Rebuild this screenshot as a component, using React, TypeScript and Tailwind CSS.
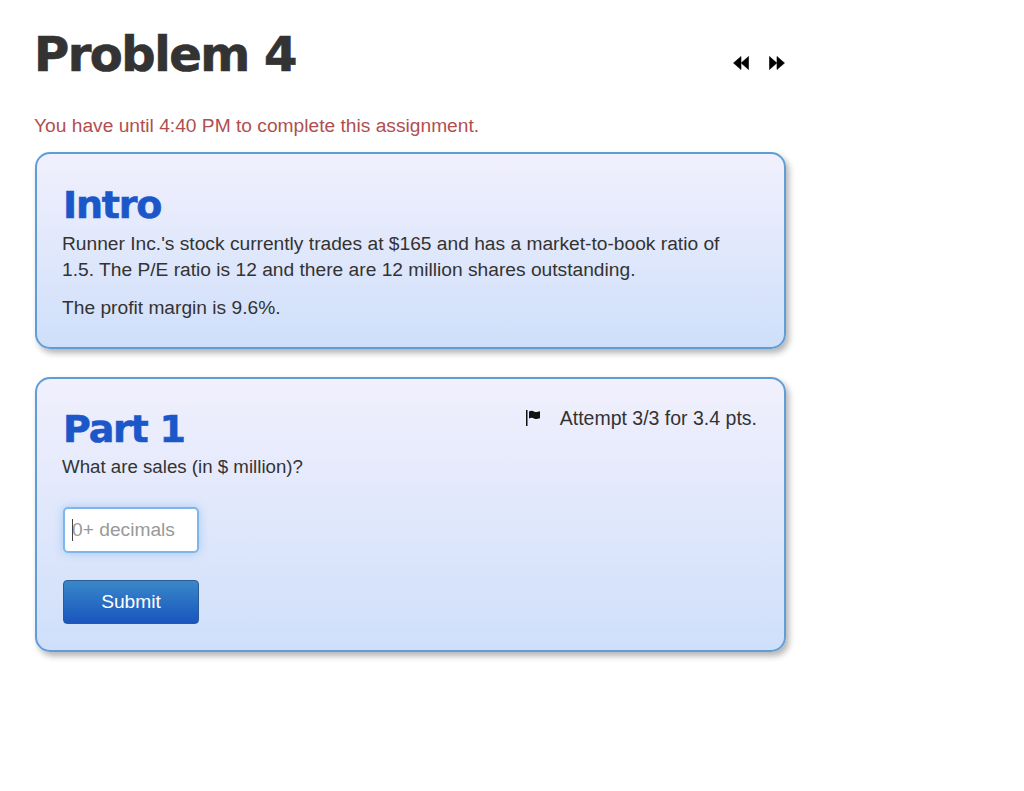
function Heading({ children }: { children: string }) {
  return (
    <h2 className="ml-[1px] font-['DejaVu_Sans',sans-serif] text-[38px] leading-[40px] font-bold tracking-[-1.200px] text-[#1b57c9] [-webkit-text-stroke:0.6px_#1b57c9]">
      {children}
    </h2>
  );
}

function Card({ children, className }: { children: React.ReactNode; className: string }) {
  return (
    <section
      className={`w-[751px] rounded-[15px] border-2 border-[#5f9dd6] bg-gradient-to-b from-[#f1f0fd] to-[#cfdffa] px-[25px] shadow-[3px_4px_6px_rgba(0,0,0,0.3)] ${className}`}
    >
      {children}
    </section>
  );
}

export default function App() {
  return (
    <div className="min-h-[791px] bg-white pl-[35px] font-['Liberation_Sans',Arial,sans-serif] text-[19.2px] leading-[26px] text-[#333]">
      <div className="flex w-[751px] items-start justify-between pt-[28px]">
        <h1 className="-ml-[1px] font-['DejaVu_Sans',sans-serif] text-[48px] leading-[52px] font-bold tracking-[-1.500px] text-[#333] [-webkit-text-stroke:0.7px_#333]">
          Problem 4
        </h1>
        <div className="mt-[28px] mr-[1px] flex items-center gap-[20px] text-black">
          <svg width="16" height="14" viewBox="0 0 16 14" fill="currentColor" stroke="currentColor" strokeWidth="0.6" strokeLinejoin="round">
            <path d="M0.500 7 8 .5v13zM8.200 7 15.500 .5v13z" />
          </svg>
          <svg width="16" height="14" viewBox="0 0 16 14" fill="currentColor" stroke="currentColor" strokeWidth="0.6" strokeLinejoin="round">
            <path d="M15.500 7 8 .5v13zM7.800 7 .5 .5v13z" />
          </svg>
        </div>
      </div>

      <p className="mt-[33px] -ml-[1px] text-[#b04f4f]">You have until 4:40 PM to complete this assignment.</p>

      <Card className="mt-[13px] h-[197px] pt-[31px]">
        <Heading>Intro</Heading>
        <p className="mt-[6px] w-[680px]">
          Runner Inc.'s stock currently trades at $165 and has a market-to-book ratio of 1.5. The P/E ratio is 12 and
          there are 12 million shares outstanding.
        </p>
        <p className="mt-[12px]">The profit margin is 9.6%.</p>
      </Card>

      <Card className="mt-[28px] h-[275px] pt-[30px]">
        <div className="flex items-start justify-between">
          <Heading>Part 1</Heading>
          <div className="-mt-[4px] flex items-center gap-[19px] pr-[2px] text-[19.500px]">
            <svg width="16" height="16" viewBox="0 0 16 16" fill="#111">
              <path d="M1 0h1.500v16H1zM4 1.500c2-1 3.500-.800 5 0s3 .600 6-.200v7c-3 .800-4.500 1-6 .200s-3-1-5 0z" />
            </svg>
            <span>Attempt 3/3 for 3.4 pts.</span>
          </div>
        </div>
        <p className="mt-[5px] text-[18.700px]">What are sales (in $ million)?</p>
        <div className="relative mt-[27px] ml-[1px] w-[136px]">
          <input
            placeholder="0+ decimals"
            readOnly
            className="block h-[46px] w-[136px] rounded-[5px] border-2 border-[#7fb5ea] bg-white px-[7px] text-[19.200px] shadow-[0_0_8px_rgba(102,175,233,0.5)] outline-none placeholder:text-[#999]"
          />
          <span className="absolute top-[12px] left-[9px] h-[22px] w-[1px] bg-[#444]" />
        </div>
        <button className="mt-[27px] ml-[1px] block h-[44px] w-[136px] rounded-[4px] border border-[#2b5a94] bg-gradient-to-b from-[#3a87c9] to-[#1b55bd] text-[19.200px] text-white">
          Submit
        </button>
      </Card>
    </div>
  );
}
